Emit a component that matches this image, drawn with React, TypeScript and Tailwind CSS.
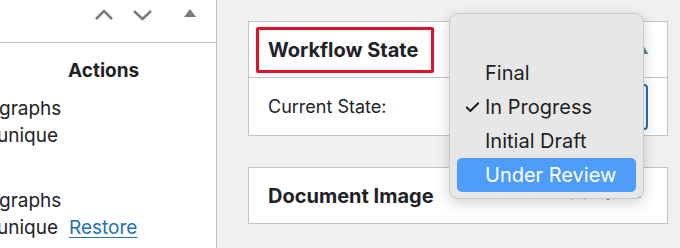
import { Check } from "lucide-react";

const font = { fontFamily: "Inter, 'Noto Sans', sans-serif" };

function Chevrons() {
  return (
    <div className="flex items-center text-[#787c82]">
      <svg width="20" height="12" viewBox="0 0 20 12" className="ml-[94px]">
        <path d="M2 10 L10 2 L18 10" fill="none" stroke="currentColor" strokeWidth="2.6" />
      </svg>
      <svg width="21" height="12" viewBox="0 0 21 12" className="ml-[18px]">
        <path d="M2 2 L10.5 10 L19 2" fill="none" stroke="currentColor" strokeWidth="2.6" />
      </svg>
      <svg width="12" height="9" viewBox="0 0 12 9" className="ml-[31px] -mt-[3px]">
        <path d="M6 0 L12 8 L0 8 Z" fill="currentColor" />
      </svg>
    </div>
  );
}

function Dropdown() {
  const items = ["Final", "In Progress", "Initial Draft", "Under Review"];
  return (
    <div className="absolute left-[449px] top-[13px] w-[195px] h-[186px] rounded-[9px] bg-[#e7e7e8] border border-[#c9c9cb] shadow-[0_4px_14px_rgba(0,0,0,0.18)] pt-[42px] px-[7px]">
      {items.map((it) => {
        const active = it === "Under Review";
        return (
          <div
            key={it}
            className={
              "relative h-[34px] flex items-center pl-[28px] rounded-[5px] text-[20px] " +
              (active ? "bg-[#4f9dfb] text-white" : "text-[#1f1f1f]")
            }
          >
            {it === "In Progress" && (
              <Check className="absolute left-[7px] top-[9px] size-[17px]" strokeWidth={2.8} />
            )}
            {it}
          </div>
        );
      })}
    </div>
  );
}

export default function App() {
  return (
    <div className="relative flex w-[680px] h-[248px] overflow-hidden bg-[#f0f0f1] text-[#1d2327]" style={font}>
      {/* left list panel */}
      <div className="w-[217px] h-full bg-white border-r border-[#c3c4c7] flex flex-col overflow-hidden">
        <div className="h-[43px] shrink-0 border-b border-[#c3c4c7] pt-[9px]">
          <Chevrons />
        </div>
        <div className="pl-[68px] pt-[15px] text-[19px] font-bold leading-[26px]">Actions</div>
        <div className="mt-[11px] text-[19px] leading-[27px]">
          <div className="-ml-[1px]">graphs</div>
          <div className="-ml-[3px]">unique</div>
          <div className="h-[38px]" />
          <div className="-ml-[1px]">graphs</div>
          <div className="-ml-[3px] flex">
            unique
            <a className="ml-[11px] text-[#2271b1] underline underline-offset-[3px]">Restore</a>
          </div>
        </div>
      </div>

      {/* editor meta boxes */}
      <div className="flex-1 pl-[31px] pt-[21px]">
        <div className="w-[420px] bg-white border border-[#c3c4c7]">
          <div className="h-[56px] border-b border-[#c3c4c7] flex items-center pl-[7px] pr-[18px]">
            <div className="h-[46px] w-[178px] border-[3px] border-[#e4112b] rounded-[2px] flex items-center pl-[9px] text-[20px] font-bold">
              Workflow State
            </div>
            <span className="ml-auto text-[#787c82] text-[12px]">▲</span>
          </div>
          <div className="h-[57px] flex items-center pl-[19px] pr-[19px]">
            <span className="text-[18px]">Current State:</span>
            <div className="ml-auto h-[46px] w-[190px] rounded-[4px] border-2 border-[#2271b1]" />
          </div>
        </div>

        <div className="mt-[31px] w-[420px] h-[57px] bg-white border border-[#c3c4c7] flex items-center pl-[19px] pr-[26px]">
          <span className="text-[20px] font-bold">Document Image</span>
          <div className="ml-auto flex items-center gap-[12px] text-[#787c82] -mt-[2px]">
            <svg width="18" height="10" viewBox="0 0 18 10">
              <path d="M2 9 L9 2 L16 9" fill="none" stroke="currentColor" strokeWidth="2.4" />
            </svg>
            <svg width="18" height="10" viewBox="0 0 18 10">
              <path d="M2 2 L9 9 L16 2" fill="none" stroke="currentColor" strokeWidth="2.4" />
            </svg>
            <svg width="12" height="9" viewBox="0 0 12 9">
              <path d="M6 0 L12 8 L0 8 Z" fill="currentColor" />
            </svg>
          </div>
        </div>
      </div>

      <Dropdown />
    </div>
  );
}
